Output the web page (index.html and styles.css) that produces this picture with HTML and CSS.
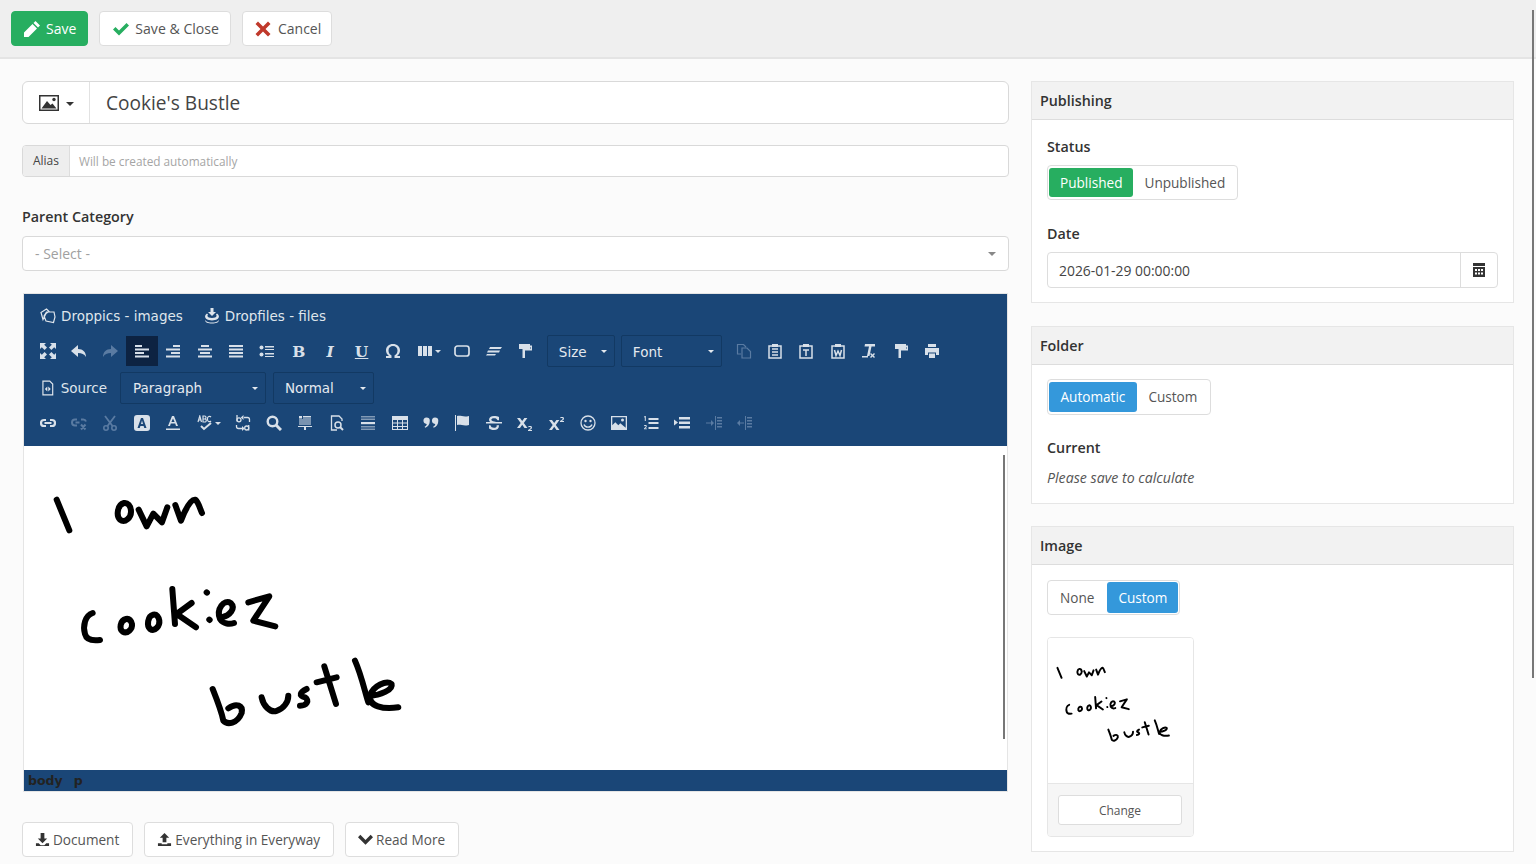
FILE: index.html
```html
<!DOCTYPE html>
<html lang="en">
<head>
<meta charset="utf-8">
<title>Cookie's Bustle</title>
<link rel="stylesheet" href="styles.css">
</head>
<body>
<svg class="sprite" aria-hidden="true">
  <symbol id="hand" viewBox="0 0 380 260">
    <g class="ink" transform="scale(.3333)">
      <path d="M50 62L88 154"/>
      <path d="M252 72C232 77 228 110 240 122C255 134 274 115 273 97C273 80 262 70 252 72Z"/>
      <path d="M296 92L320 142L340 104L366 130L382 85"/>
      <path d="M406 78L423 125C438 85 454 60 466 62C476 70 480 90 486 102"/>
      <path d="M158 402C135 410 128 440 135 465C140 485 165 485 180 483"/>
      <path d="M258 420C240 424 237 450 248 458C262 466 278 450 276 435C274 425 268 418 258 420Z"/>
      <path d="M340 407C322 412 320 440 330 450C345 460 360 440 358 425C356 414 350 405 340 407Z"/>
      <path d="M397 330L405 435M455 372L410 405L468 445"/>
      <path d="M500 340L501 341M508 422L509 423"/>
      <path d="M545 415C570 410 588 388 572 372C552 360 528 390 540 420C550 436 570 436 582 432"/>
      <path d="M625 370L688 352L640 425L706 442"/>
      <path d="M518 630C530 660 545 700 550 725C562 738 592 735 605 702C610 680 590 670 565 688"/>
      <path d="M665 655C670 680 690 702 710 696C730 690 745 670 745 650"/>
      <path d="M800 630C780 640 775 650 795 655C810 665 800 680 780 680"/>
      <path d="M853 562L888 675M830 610L890 595"/>
      <path d="M945 545C965 590 975 640 985 670"/>
      <path d="M990 650C1020 650 1060 632 1055 615C1040 603 1000 620 990 650C985 682 1030 692 1075 685"/>
    </g>
  </symbol>
  <symbol id="i-full" viewBox="0 0 16 16"><path d="M0 0h6L4.200 1.800 7 4.600 4.600 7 1.800 4.200 0 6zM16 0v6l-1.800-1.800L11.400 7 9 4.600l2.800-2.800L10 0zM0 16v-6l1.800 1.800L4.600 9 7 11.400l-2.800 2.800L6 16zM16 16h-6l1.800-1.800L9 11.400 11.400 9l2.800 2.800L16 10z"/></symbol>
  <symbol id="i-undo" viewBox="0 0 16 16"><path d="M7 2L0 8l7 6v-4c4 0 6 1 8 4 0-5-3-8-8-8z"/></symbol>
  <symbol id="i-redo" viewBox="0 0 16 16"><path d="M9 2l7 6-7 6v-4c-4 0-6 1-8 4 0-5 3-8 8-8z"/></symbol>
  <symbol id="i-al" viewBox="0 0 16 16"><path d="M1 2h7v2H1zM1 5.500h14v2H1zM1 9h9v2H1zM1 12.500h14v2H1z"/></symbol>
  <symbol id="i-ar" viewBox="0 0 16 16"><path d="M8 2h7v2H8zM1 5.500h14v2H1zM6 9h9v2H6zM1 12.500h14v2H1z"/></symbol>
  <symbol id="i-ac" viewBox="0 0 16 16"><path d="M4 2h8v2H4zM1 5.500h14v2H1zM3 9h10v2H3zM1 12.500h14v2H1z"/></symbol>
  <symbol id="i-aj" viewBox="0 0 16 16"><path d="M1 2h14v2H1zM1 5.500h14v2H1zM1 9h14v2H1zM1 12.500h14v2H1z"/></symbol>
  <symbol id="i-ul" viewBox="0 0 16 16"><circle cx="2.500" cy="4.500" r="2"/><circle cx="2.500" cy="11.500" r="2"/><path d="M6 3h9v1.500H6zM6 6h9v1H6zM6 10h9v1.500H6zM6 13h9v1H6z"/></symbol>
  <symbol id="i-omega" viewBox="0 0 16 16"><path d="M1 15v-2h3C2 11.500 1 9.500 1 7.500 1 3.500 4 1 8 1s7 2.500 7 6.500c0 2-1 4-3 5.500h3v2H9.500v-2.500c2-1 3-2.800 3-5 0-2.800-2-4.500-4.500-4.500S3.500 4.700 3.500 7.500c0 2.200 1 4 3 5V15z"/></symbol>
  <symbol id="i-cols" viewBox="0 0 16 16"><path d="M1 3h4v10H1zM6 3h4v10H6zM11 3h4v10h-4z"/></symbol>
  <symbol id="i-box" viewBox="0 0 16 16"><rect x="1" y="3" width="14" height="10" rx="2.500" class="line" stroke-width="1.700"/></symbol>
  <symbol id="i-lines" viewBox="0 0 16 16"><path d="M4 4h12l-1.500 2H3zM2 7.500h12L13 9.500H1zM1 11h9l-1 1.500H0z"/></symbol>
  <symbol id="i-roller" viewBox="0 0 16 16"><path d="M2 1h11v1.500h2v5H8v7.500H5.500V6h8V4h-.5v2H2z"/></symbol>
  <symbol id="i-copy" viewBox="0 0 16 16"><path class="line" stroke-width="1.200" d="M5 11H1.500V1.500h6L10 4M6 5h5l3.500 3.500V15H6z"/></symbol>
  <symbol id="i-paste" viewBox="0 0 16 16"><path class="line" stroke-width="1.500" d="M5 3H2v12h12V3h-3M5 6h6M5 9h6M5 12h6"/><path d="M5 1h6v3H5z"/></symbol>
  <symbol id="i-pastew" viewBox="0 0 16 16"><path class="line" stroke-width="1.500" d="M5 3H2v12h12V3h-3M5 7h6M8 7v6"/><path d="M5 1h6v3H5z"/></symbol>
  <symbol id="i-pastem" viewBox="0 0 16 16"><path class="line" stroke-width="1.500" d="M5 3H2v12h12V3h-3M4.500 7l1.500 5.500L8 8l2 4.500L11.500 7"/><path d="M5 1h6v3H5z"/></symbol>
  <symbol id="i-clear" viewBox="0 0 16 16"><path d="M4 1h10v2.500h-3.500L8.500 13H6L8 3.500H3.500zM10 10l1.500 1.500L13 10l1 1-1.500 1.500L14 14l-1 1-1.500-1.500L10 15l-1-1 1.500-1.500L9 11zM1 13h6v1.500H1z"/></symbol>
  <symbol id="i-print" viewBox="0 0 16 16"><path d="M4 1h8v3H4zM1 5h14v7h-3v-2.500H4V12H1zM5 10.500h6V15H5z"/></symbol>
  <symbol id="i-doc" viewBox="0 0 16 16"><path class="line" stroke-width="1.200" d="M3 1h7l3 3v11H3z"/><path d="M8.500 6.500L11 9l-2.500 2.500zM7.500 6.500v5L5 9z"/></symbol>
  <symbol id="i-link" viewBox="0 0 16 16"><path class="line" stroke-width="2.200" d="M6 5H4a3 3 0 000 6h2M10 5h2a3 3 0 010 6h-2M4.500 8h7"/></symbol>
  <symbol id="i-unlink" viewBox="0 0 16 16"><path class="line" stroke-width="2" d="M6 4.500H4a3 3 0 000 6h2M10 4.500h2a3 3 0 013 2M4.500 7.500h4M10 9.500l4.500 5M14.500 9.500l-4.500 5"/></symbol>
  <symbol id="i-cut" viewBox="0 0 16 16"><path class="line" stroke-width="1.800" d="M3 1l7.500 10M13 1L5.500 11"/><circle class="line" stroke-width="1.600" cx="4" cy="13" r="2.200"/><circle class="line" stroke-width="1.600" cx="12" cy="13" r="2.200"/></symbol>
  <symbol id="i-ab" viewBox="0 0 16 16"><path fill-rule="evenodd" d="M3 0h10a3 3 0 013 3v10a3 3 0 01-3 3H3a3 3 0 01-3-3V3a3 3 0 013-3zM7 3l-3.500 10h2.200l.7-2h3.200l.7 2h2.200L9 3zM8 5.600l1 3.400H7z"/></symbol>
  <symbol id="i-a" viewBox="0 0 16 16"><path fill-rule="evenodd" d="M7 1L3 11h2l.8-2.500h4.400L11 11h2L9 1zM8 3.500L9.600 7H6.400zM1 13.500h14V15H1z"/></symbol>
  <symbol id="i-spell" viewBox="0 0 16 16"><path class="line" stroke-width="1.200" d="M1 7L2.800 1 4.500 7M1.700 5h2.200M6 1v6h1.800a1.500 1.500 0 000-3H6h1.500a1.500 1.500 0 000-3zM14 2a2 2 0 00-3.500 1.500V5A2 2 0 0014 6"/><path class="line" stroke-width="2" d="M4 11l3 3 7-6"/></symbol>
  <symbol id="i-find" viewBox="0 0 16 16"><path class="line" stroke-width="1.300" d="M2 0v6.500"/><circle class="line" stroke-width="1.300" cx="4" cy="4.800" r="2"/><circle class="line" stroke-width="1.300" cx="11.700" cy="13" r="2"/><path class="line" stroke-width="1.300" d="M13.700 10v5.500M9 2.500h3.500a2 2 0 012 2V7M1.500 10v1.500a2 2 0 002 2H7"/><path d="M8.500 0v5L5.800 2.500zM7 11v5l2.700-2.500z"/></symbol>
  <symbol id="i-search" viewBox="0 0 16 16"><circle class="line" stroke-width="2.400" cx="6.500" cy="6.500" r="4.800"/><path class="line" stroke-width="3" d="M10 10l5 5"/></symbol>
  <symbol id="i-block" viewBox="0 0 16 16"><path d="M2 1h3v2.500H2zM6 1h8v1H6zM6 2.500h8v1H6zM2 4.500h12v1H2zM2 6.500h12v1H2zM2 8.500h12v1H2zM1 11h14v1H1zM7 12h2v3H7z"/></symbol>
  <symbol id="i-prev" viewBox="0 0 16 16"><path class="line" stroke-width="1.300" d="M8 15H2.500V1H10l3 3v2"/><circle class="line" stroke-width="1.500" cx="9" cy="10" r="3"/><path class="line" stroke-width="2" d="M11 12l3 3"/></symbol>
  <symbol id="i-hr" viewBox="0 0 16 16"><path d="M1 7h14v2.200H1z"/><path class="dim" d="M1 1h14v1.500H1zM1 3.500h14V5H1zM1 11h14v1.500H1zM1 13.500h14V15H1z"/></symbol>
  <symbol id="i-table" viewBox="0 0 16 16"><path fill-rule="evenodd" d="M0 1h16v14H0zM1 5v2.500h4V5zM6 5v2.500h4V5zM11 5v2.500h4V5zM1 8.500V11h4V8.500zM6 8.500V11h4V8.500zM11 8.500V11h4V8.500zM1 12v2h4v-2zM6 12v2h4v-2zM11 12v2h4v-2z"/></symbol>
  <symbol id="i-quote" viewBox="0 0 16 16"><path d="M3.500 2.500a3.300 3.300 0 013.300 3.300c0 3.500-1.800 6-4.600 7l-.6-1c1.200-.6 2-1.700 2.200-2.900A3.200 3.200 0 013.500 2.500zM12 2.500a3.300 3.300 0 013.300 3.300c0 3.500-1.800 6-4.600 7l-.6-1c1.200-.6 2-1.700 2.200-2.900A3.200 3.200 0 0112 2.500z"/></symbol>
  <symbol id="i-flag" viewBox="0 0 16 16"><path d="M1 0h1v16H1zM3 1c4-1 6 1.500 12 0v9c-6 1.500-8-1-12 0z"/></symbol>
  <symbol id="i-strike" viewBox="0 0 16 16"><path d="M13 2v3.300h-1.500C11 3.800 10 3.200 8 3.200c-1.700 0-2.700.6-2.700 1.600 0 .9 1 1.400 3 1.800l1.800.4H16v1.500H0V7h4.200C3.400 6.400 3 5.600 3 4.700 3 2.500 5 1 8 1c2 0 3.700.3 5 1zM13 10.500c0 3-2 4.500-5 4.500-2.300 0-4-.6-5-1.500v-3.200h1.500c.5 1.800 1.700 2.500 3.500 2.500 1.700 0 2.700-.7 2.700-1.800 0-.2 0-.5-.2-.7H13z"/></symbol>
  <symbol id="i-sub" viewBox="0 0 16 16"><path d="M0 3h3l2.200 3L7.400 3h3L6.800 8l3.700 5h-3L5.200 9.800 3 13H0l3.700-5zM11 16v-1c2-1.300 2.800-2 2.800-2.500 0-.8-1.300-.7-2.500-.2v-1c1.700-.6 3.700-.4 3.700 1.100 0 1-1 1.800-2.200 2.600H15v1z"/></symbol>
  <symbol id="i-sup" viewBox="0 0 16 16"><path d="M0 5h3l2.200 3L7.400 5h3L6.800 10l3.700 5h-3l-2.300-3.200L3 15H0l3.700-5zM11 7V6c2-1.300 2.800-2 2.800-2.500 0-.8-1.300-.7-2.500-.2v-1c1.700-.6 3.700-.4 3.700 1.100 0 1-1 1.800-2.200 2.600H15v1z"/></symbol>
  <symbol id="i-smile" viewBox="0 0 16 16"><circle class="line" stroke-width="1.300" cx="8" cy="8" r="7"/><circle cx="5.500" cy="6" r="1.200"/><circle cx="10.500" cy="6" r="1.200"/><path class="line" stroke-width="1.300" d="M4 9.500c1 3.500 7 3.500 8 0"/></symbol>
  <symbol id="i-img" viewBox="0 0 16 16"><path fill-rule="evenodd" d="M0 1h16v14H0zM1.300 2.300v8l3-3 3 3 2-2 5.400 4.500V2.300z"/><circle cx="11.500" cy="5" r="1.500"/></symbol>
  <symbol id="i-ol" viewBox="0 0 16 16"><path d="M5.500 3h10v2h-10zM5.500 7h10v2h-10zM5.500 12h10v2h-10zM1.500 1h1.300v5h-1v-3.800L1 2.500zM1 10.500c1-.6 2.800-.6 2.800.7 0 .8-.8 1.500-1.600 2.300h1.700v.8H1v-.8c1-.9 1.800-1.600 1.800-2.200 0-.5-1-.4-1.800 0z"/></symbol>
  <symbol id="i-ind" viewBox="0 0 16 16"><path d="M5 2h11v2.500H5zM5 6.500h11V9H5zM5 11h11v2.500H5zM0 4.500l4 3-4 3z"/></symbol>
  <symbol id="i-rtl" viewBox="0 0 16 16"><path d="M9 1h1v14H9zM11 2h5v1.500h-5zM11 5h5v1.500h-5zM11 8h5v1.500h-5zM11 11h5v1.500h-5zM0 7.500h5V5l3 3-3 3V8.500H0z"/></symbol>
  <symbol id="i-ltr" viewBox="0 0 16 16"><path d="M8 1h1v14H8zM10 2h5v1.500h-5zM10 5h5v1.500h-5zM10 8h5v1.500h-5zM10 11h5v1.500h-5zM7 7.500H3V5L0 8l3 3V8.500h4z"/></symbol>
  <symbol id="i-download" viewBox="0 0 16 16"><path d="M6 1h4v6h3l-5 5-5-5h3zM1 12h3l2 2h4l2-2h3v3H1z"/></symbol>
  <symbol id="i-upload" viewBox="0 0 16 16"><path d="M8 1l5 5h-3v5H6V6H3zM1 12h4v1h6v-1h4v3H1z"/></symbol>
  <symbol id="i-chev" viewBox="0 0 16 16"><path d="M0 5.500L2.500 3 8 8.500 13.500 3 16 5.500 8 13.500z"/></symbol>
  <symbol id="i-pen" viewBox="0 0 16 16"><path d="M11.500 0L16 4.500 14 6.500 9.500 2zM8.500 3l4.500 4.500L4.500 16H0v-4.500z"/></symbol>
  <symbol id="i-check" viewBox="0 0 16 16"><path d="M0 8.500L2.500 6l3.500 3.500L13.500 2 16 4.500 6 14.500z"/></symbol>
  <symbol id="i-x" viewBox="0 0 16 16"><path d="M3 .5L8 5.500 13 .5 15.500 3 10.500 8l5 5L13 15.500l-5-5-5 5L.5 13l5-5-5-5z"/></symbol>
  <symbol id="i-pic" viewBox="0 0 20 16"><path fill-rule="evenodd" d="M0 0h20v16H0zM1.500 1.500v13h17v-13z"/><path d="M2.500 13.500L8 6l3.500 4 2-1.500 4 5z"/><circle cx="15" cy="4.500" r="1.700"/></symbol>
  <symbol id="i-cal" viewBox="0 0 14 14"><path fill-rule="evenodd" d="M1 0h12v3H1zM1 4h12v10H1zM3 6v2h2V6zM6 6v2h2V6zM9 6v2h2V6zM3 9.500v2h2v-2zM6 9.500v2h2v-2zM9 9.500v2h2v-2z"/></symbol>
  <symbol id="i-droppics" viewBox="0 0 16 16"><path class="line" stroke-width="1.200" d="M1 4.500L6.500 1 9 3.500 6 5.500l-3 6zM6.500 4h7.500l1 5-1.500 5.500L6 13 4 8z"/></symbol>
  <symbol id="i-dropfiles" viewBox="0 0 16 16"><path d="M6.500 0h3v4H12L8 8 4 4h2.500zM3 5.500c-4 3-1.500 7 5 7s9-4 5-7l-1 1c1.800 2-1 3.500-4 3.500S2.200 8.500 4 6.500zM1 12c1.500 2 4 2.500 7 2.500s5.500-.5 7-2.500c0 2.500-3 3.500-7 3.500S1 14.500 1 12z"/></symbol>
</svg>

<div class="page">
  <header class="topbar">
    <button class="btn btn-save"><svg class="bi"><use href="#i-pen"/></svg>Save</button>
    <button class="btn"><svg class="bi green"><use href="#i-check"/></svg>Save &amp; Close</button>
    <button class="btn btn-cancel"><svg class="bi red"><use href="#i-x"/></svg>Cancel</button>
  </header>

  <main class="layout">
    <section class="primary">
      <div class="title-group">
        <div class="title-prefix"><svg class="pic"><use href="#i-pic"/></svg><span class="caret dark"></span></div>
        <div class="title-input">Cookie's Bustle</div>
      </div>
      <div class="alias-group">
        <div class="alias-label">Alias</div>
        <div class="alias-input">Will be created automatically</div>
      </div>
      <div class="field-label parent-label">Parent Category</div>
      <div class="select-box"><span>- Select -</span><span class="caret grey"></span></div>

      <div class="editor">
        <div class="ed-toolbar">
          <div class="ed-row ed-row1">
            <span class="ed-link"><svg class="ti"><use href="#i-droppics"/></svg>Droppics - images</span>
            <span class="ed-link"><svg class="ti"><use href="#i-dropfiles"/></svg>Dropfiles - files</span>
          </div>
          <div class="ed-row ed-row2">
            <span class="tb"><svg class="ti"><use href="#i-full"/></svg></span>
            <span class="tb"><svg class="ti"><use href="#i-undo"/></svg></span>
            <span class="tb off"><svg class="ti"><use href="#i-redo"/></svg></span>
            <span class="tb on"><svg class="ti"><use href="#i-al"/></svg></span>
            <span class="tb"><svg class="ti"><use href="#i-ar"/></svg></span>
            <span class="tb"><svg class="ti"><use href="#i-ac"/></svg></span>
            <span class="tb"><svg class="ti"><use href="#i-aj"/></svg></span>
            <span class="tb"><svg class="ti"><use href="#i-ul"/></svg></span>
            <span class="tb letter">B</span>
            <span class="tb letter it">I</span>
            <span class="tb letter un">U</span>
            <span class="tb"><svg class="ti"><use href="#i-omega"/></svg></span>
            <span class="tb wide"><svg class="ti"><use href="#i-cols"/></svg><span class="mini-caret"></span></span>
            <span class="tb"><svg class="ti"><use href="#i-box"/></svg></span>
            <span class="tb"><svg class="ti"><use href="#i-lines"/></svg></span>
            <span class="tb"><svg class="ti"><use href="#i-roller"/></svg></span>
            <span class="ed-select size">Size<span class="caret"></span></span>
            <span class="ed-select font">Font<span class="caret"></span></span>
            <span class="tb off first"><svg class="ti"><use href="#i-copy"/></svg></span>
            <span class="tb"><svg class="ti"><use href="#i-paste"/></svg></span>
            <span class="tb"><svg class="ti"><use href="#i-pastew"/></svg></span>
            <span class="tb"><svg class="ti"><use href="#i-pastem"/></svg></span>
            <span class="tb"><svg class="ti"><use href="#i-clear"/></svg></span>
            <span class="tb"><svg class="ti"><use href="#i-roller"/></svg></span>
            <span class="tb"><svg class="ti"><use href="#i-print"/></svg></span>
          </div>
          <div class="ed-row ed-row3">
            <span class="ed-link source"><svg class="ti"><use href="#i-doc"/></svg>Source</span>
            <span class="ed-select para">Paragraph<span class="caret"></span></span>
            <span class="ed-select normal">Normal<span class="caret"></span></span>
          </div>
          <div class="ed-row ed-row4">
            <span class="tb"><svg class="ti"><use href="#i-link"/></svg></span>
            <span class="tb off"><svg class="ti"><use href="#i-unlink"/></svg></span>
            <span class="tb off"><svg class="ti"><use href="#i-cut"/></svg></span>
            <span class="tb"><svg class="ti"><use href="#i-ab"/></svg></span>
            <span class="tb"><svg class="ti"><use href="#i-a"/></svg></span>
            <span class="tb wide spell"><svg class="ti"><use href="#i-spell"/></svg><span class="mini-caret"></span></span>
            <span class="tb"><svg class="ti"><use href="#i-find"/></svg></span>
            <span class="tb"><svg class="ti"><use href="#i-search"/></svg></span>
            <span class="tb"><svg class="ti"><use href="#i-block"/></svg></span>
            <span class="tb"><svg class="ti"><use href="#i-prev"/></svg></span>
            <span class="tb"><svg class="ti"><use href="#i-hr"/></svg></span>
            <span class="tb"><svg class="ti"><use href="#i-table"/></svg></span>
            <span class="tb"><svg class="ti"><use href="#i-quote"/></svg></span>
            <span class="tb"><svg class="ti"><use href="#i-flag"/></svg></span>
            <span class="tb"><svg class="ti"><use href="#i-strike"/></svg></span>
            <span class="tb"><svg class="ti"><use href="#i-sub"/></svg></span>
            <span class="tb"><svg class="ti"><use href="#i-sup"/></svg></span>
            <span class="tb"><svg class="ti"><use href="#i-smile"/></svg></span>
            <span class="tb"><svg class="ti"><use href="#i-img"/></svg></span>
            <span class="tb"><svg class="ti"><use href="#i-ol"/></svg></span>
            <span class="tb"><svg class="ti"><use href="#i-ind"/></svg></span>
            <span class="tb off"><svg class="ti"><use href="#i-rtl"/></svg></span>
            <span class="tb off"><svg class="ti"><use href="#i-ltr"/></svg></span>
          </div>
        </div>
        <div class="ed-content">
          <svg class="hand-big" role="img" aria-label="Handwritten picture"><use href="#hand"/></svg>
          <div class="ed-scroll"></div>
        </div>
        <div class="ed-status"><span>body</span><span>p</span></div>
      </div>

      <div class="actions">
        <button class="btn"><svg class="si"><use href="#i-download"/></svg>Document</button>
        <button class="btn"><svg class="si"><use href="#i-upload"/></svg>Everything in Everyway</button>
        <button class="btn"><svg class="si"><use href="#i-chev"/></svg>Read More</button>
      </div>
    </section>

    <aside class="side">
      <div class="panel publishing">
        <div class="panel-head">Publishing</div>
        <div class="panel-body">
          <div class="field-label">Status</div>
          <div class="toggle toggle-status"><span class="opt green-on">Published</span><span class="opt">Unpublished</span></div>
          <div class="field-label date-label">Date</div>
          <div class="date-group"><div class="date-input">2026-01-29 00:00:00</div><div class="date-addon"><svg class="cal"><use href="#i-cal"/></svg></div></div>
        </div>
      </div>
      <div class="panel folder">
        <div class="panel-head">Folder</div>
        <div class="panel-body">
          <div class="toggle toggle-folder"><span class="opt blue-on">Automatic</span><span class="opt">Custom</span></div>
          <div class="field-label current-label">Current</div>
          <div class="hint">Please save to calculate</div>
        </div>
      </div>
      <div class="panel image">
        <div class="panel-head">Image</div>
        <div class="panel-body">
          <div class="toggle toggle-image"><span class="opt">None</span><span class="opt blue-on">Custom</span></div>
          <div class="thumb-card">
            <div class="thumb"><svg class="hand-small" role="img" aria-label="Handwritten thumbnail"><use href="#hand"/></svg></div>
            <div class="thumb-foot"><button class="btn-change">Change</button></div>
          </div>
        </div>
      </div>
    </aside>
  </main>
  <div class="page-scroll"></div>
</div>
</body>
</html>
```
FILE: styles.css
```css
* { box-sizing: border-box; }
html, body { margin: 0; height: 100%; overflow: hidden; }
body { font-family: "Open Sans", "Noto Sans", sans-serif; font-size: 14px; color: #444; background: #fbfbfb; }
.sprite { display: none; }
.ink { fill: none; stroke: #000; stroke-width: 18; stroke-linecap: round; stroke-linejoin: round; }
.line { fill: none; stroke: currentColor; }
.dim { opacity: .55; }
symbol path, symbol circle { fill: currentColor; }
symbol .line, symbol .ink path { fill: none; }

.page { position: relative; width: 1536px; height: 864px; overflow: hidden; }
.topbar { height: 59px; background: #efefef; border-bottom: 2px solid #e4e4e4; padding: 11px 11px 0; display: flex; gap: 11px; align-items: flex-start; }
.btn { height: 35px; padding: 0 11px; display: inline-flex; align-items: center; font: inherit; color: #555; background: #fff; border: 1px solid #ddd; border-radius: 4px; white-space: nowrap; }
.topbar .btn { padding: 0 11px 0 13px; font-size: 14.1px; }
.topbar .btn-save { padding: 0 11px 0 12px; background: #27ae60; border-color: #27ae60; color: #fff; font-size: 14px; }
.topbar .btn-cancel { padding: 0 10px 0 12px; font-size: 14px; }
.bi { width: 16px; height: 16px; margin-right: 6px; color: #fff; }
.bi.green { color: #27ae60; }
.bi.red { color: #c0392b; margin-right: 7px; }

.layout { display: flex; gap: 22px; padding: 22px 22px 0; align-items: flex-start; }
.primary { width: 987px; flex: none; }
.side { width: 483px; flex: none; margin-top: 0; }

.title-group { display: flex; height: 43px; background: #fff; border: 1px solid #d9d9d9; border-radius: 6px; }
.title-prefix { width: 67px; flex: none; border-right: 1px solid #e2e2e2; display: flex; align-items: center; padding-left: 16px; color: #333; }
.pic { width: 20px; height: 16px; }
.caret { display: inline-block; width: 0; height: 0; border-left: 4px solid transparent; border-right: 4px solid transparent; border-top: 4px solid currentColor; }
.caret.dark { margin-left: 7px; margin-top: 3px; }
.title-input { flex: 1; padding: 1px 0 0 16px; font-size: 19.1px; line-height: 41px; color: #444; }

.alias-group { display: flex; height: 32px; margin-top: 21px; background: #fff; border: 1px solid #d9d9d9; border-radius: 4px; }
.alias-label { width: 47px; flex: none; background: #eee; border-right: 1px solid #ddd; font-size: 12px; line-height: 30px; text-align: center; border-radius: 3px 0 0 3px; }
.alias-input { padding-left: 9px; font-size: 11.8px; line-height: 31px; color: #a5a5a5; }

.field-label { font-weight: 600; font-size: 14.3px; color: #333; line-height: 20px; }
.parent-label { margin-top: 30px; }
.select-box { display: flex; justify-content: space-between; align-items: center; height: 35px; margin-top: 9px; padding: 0 12px; background: #fff; border: 1px solid #d9d9d9; border-radius: 4px; color: #a0a0a0; }
.caret.grey { color: #888; }

.editor { margin: 22px 1px 0; width: 985px; border: 1px solid #e5e5e5; }
.ed-toolbar { height: 152px; background: #1a4677; color: #e4e9ef; font-family: "DejaVu Sans", Verdana, sans-serif; font-size: 13.5px; padding: 0 0 0 8px; }
.ed-row { display: flex; align-items: center; }
.ed-row1 { height: 41px; padding: 3px 0 0 8px; gap: 21px; }
.ed-link { display: inline-flex; align-items: center; gap: 5px; color: #dfe5ec; }
.ed-row2 { height: 32px; }
.ed-row3 { height: 40px; padding: 2px 0 0 8px; }
.ed-row4 { height: 32px; }
.ti { width: 16px; height: 16px; display: block; }
.tb { width: 31.4px; height: 30px; flex: none; display: flex; align-items: center; justify-content: center; color: #d8e0e9; }
.tb.on { background: #0d2342; }
.tb.off { color: #5a7ba2; }
.tb.wide { width: 38px; padding-left: 2px; gap: 2px; }
.letter { font-weight: 700; font-size: 15.5px; font-family: "DejaVu Serif", serif; }
.it { font-style: italic; }
.un { text-decoration: underline; }
.mini-caret { width: 0; height: 0; border-left: 3px solid transparent; border-right: 3px solid transparent; border-top: 3px solid currentColor; }
.ed-select { display: flex; align-items: center; justify-content: space-between; height: 32px; padding: 1px 7px 0 11px; border: 1px solid #123963; border-radius: 2px; color: #e4e9ef; }
.ed-select .caret { border-left-width: 3px; border-right-width: 3px; border-top-width: 3px; }
.size { width: 68px; margin-left: 6px; }
.font { width: 101px; margin-left: 6px; }
.first { margin-left: 6px; }
.para { width: 146px; margin-left: 13px; padding: 0 7px 0 12px; }
.normal { width: 101px; margin-left: 7px; padding-top: 0; }
.source { width: 67px; }

.ed-content { position: relative; height: 324px; background: #fff; padding: 33px 0 0 16px; }
.hand-big { display: block; width: 380px; height: 260px; }
.ed-scroll { position: absolute; left: 979px; top: 9px; width: 2px; height: 284px; background: #777; }
.ed-status { height: 21px; background: #1a4677; color: #222; font-family: "DejaVu Sans", Verdana, sans-serif; font-weight: 700; font-size: 12.5px; line-height: 22px; padding-left: 4px; display: flex; gap: 11px; }

.actions { display: flex; gap: 11px; margin-top: 30px; }
.actions .btn { padding: 0 13px 0 12px; font-size: 13.6px; }
.si { width: 15px; height: 15px; margin-right: 3px; color: #333; }

.panel { background: #fff; border: 1px solid #e6e6e6; margin-bottom: 22px; }
.panel-head { height: 38px; background: #f2f2f2; border-bottom: 1px solid #ddd; font-weight: 600; font-size: 14.3px; color: #333; padding-left: 8px; line-height: 38px; }
.panel-body { padding: 17px 15px 0; }
.publishing { height: 222px; margin-bottom: 23px; }
.folder { height: 178px; }
.image { height: 326px; }
.folder .panel-body { padding-top: 14px; }
.image .panel-body { padding-top: 15px; }

.toggle { display: inline-flex; height: 36px; padding: 2px 1px; background: #fff; border: 1px solid #ddd; border-radius: 4px; font-size: 13.6px; }
.toggle-status { margin-top: 8px; height: 35px; }
.toggle-folder .opt { padding: 0 11.5px; }
.opt { padding: 0 11px; line-height: 30px; color: #555; }
.green-on { background: #27ae60; color: #fff; border-radius: 3px; }
.blue-on { background: #3498db; color: #fff; border-radius: 3px; }
.date-label { margin-top: 24px; }
.date-group { display: flex; height: 36px; margin-top: 8px; border: 1px solid #ddd; border-radius: 4px; width: 451px; }
.date-input { flex: 1; padding-left: 11px; line-height: 35px; color: #444; font-size: 13.9px; }
.date-addon { width: 37px; border-left: 1px solid #ddd; display: flex; align-items: center; justify-content: center; color: #333; }
.cal { width: 14px; height: 14px; }
.current-label { margin-top: 23px; }
.hint { margin-top: 10px; font-style: italic; font-size: 14.2px; color: #555; }
.toggle-image { display: flex; width: 133px; padding: 0; height: 35px; }
.toggle-image .opt { line-height: 33px; padding: 0 12px; }
.toggle-image .blue-on { margin: 1px; line-height: 31px; padding: 0 11px; }
.thumb-card { width: 147px; height: 200px; margin-top: 22px; border: 1px solid #e6e6e6; border-radius: 4px; overflow: hidden; }
.thumb { height: 145px; padding: 23px 0 0 4px; background: #fff; }
.hand-small { display: block; width: 124px; height: 85px; }
.thumb-foot { height: 54px; background: #f6f6f6; border-top: 1px solid #e6e6e6; padding: 11px 10px 0; }
.btn-change { display: block; width: 124px; height: 30px; font: inherit; font-size: 12px; color: #555; background: #fff; border: 1px solid #ddd; border-radius: 3px; }

.page-scroll { position: absolute; right: 2px; top: 10px; width: 2px; height: 668px; background: #777; }
```
